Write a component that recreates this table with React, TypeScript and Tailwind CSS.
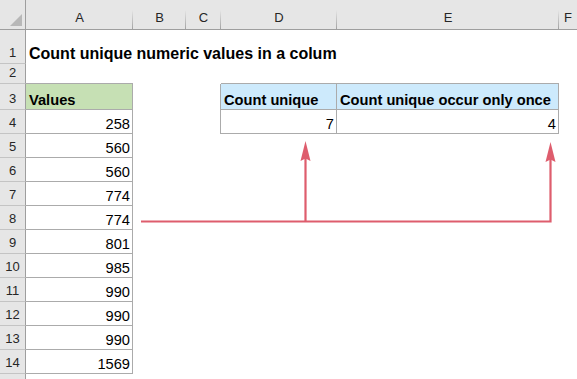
import React from 'react'

const COLS = ['A', 'B', 'C', 'D', 'E', 'F']
const VALUES = [258, 560, 560, 774, 774, 801, 985, 990, 990, 990, 1569]
const LINE = 'border-[#ababab]'

type Cell = {
  text?: string
  right?: boolean
  bold?: boolean
  title?: boolean
  fill?: string
  r?: boolean
  b?: boolean
}

// what each sheet cell holds, keyed by row number and column index
function cellAt(row: number, col: number): Cell {
  if (row === 1 && col === 0) return { text: 'Count unique numeric values in a colum', bold: true, title: true }
  if (row === 2 && (col === 0 || col === 3 || col === 4)) return { b: true }
  if (row === 3 && col === 0) return { text: 'Values', bold: true, fill: 'bg-[#c6e0b4]', r: true, b: true }
  if (row >= 4 && row <= 14 && col === 0) return { text: String(VALUES[row - 4]), right: true, r: true, b: true }
  if ((row === 3 || row === 4) && col === 2) return { r: true }
  if (row === 3 && col === 3) return { text: 'Count unique', bold: true, fill: 'bg-[#cdeafc]', r: true, b: true }
  if (row === 3 && col === 4) return { text: 'Count unique occur only once', bold: true, fill: 'bg-[#cdeafc]', r: true, b: true }
  if (row === 4 && col === 3) return { text: '7', right: true, r: true, b: true }
  if (row === 4 && col === 4) return { text: '4', right: true, r: true, b: true }
  return {}
}

function SheetCell({ cell }: { cell: Cell }) {
  return (
    <div
      className={[
        'relative flex items-end overflow-visible whitespace-nowrap pb-px text-black',
        cell.title ? 'text-[16px] leading-[18px]' : 'text-[14.67px] leading-4',
        cell.right ? 'justify-end pr-[2px]' : 'pl-[3px]',
        cell.bold ? 'font-bold' : '',
        cell.fill ?? '',
        cell.r ? 'border-r' : '',
        cell.b ? 'border-b' : '',
        cell.r || cell.b ? LINE : '',
      ].join(' ')}
    >
      {cell.text && <span className="relative z-10">{cell.text}</span>}
    </div>
  )
}

function Arrows() {
  const red = '#de5d6d'
  return (
    <svg className="pointer-events-none absolute left-0 top-0" width="577" height="379" viewBox="0 0 577 379">
      <path d="M141 221.5 H550.5 V158" fill="none" stroke={red} strokeWidth="2.2" />
      <path d="M305.5 221.5 V158" fill="none" stroke={red} strokeWidth="2.2" />
      <polygon points="305.5,141 310.5,161 305.5,158.5 300.5,161" fill={red} />
      <polygon points="550.5,142 555.5,162 550.5,159.5 545.5,162" fill={red} />
    </svg>
  )
}

export default function App() {
  // row 15 only peeks in at the bottom edge, so its label stays out of view
  const rows = Array.from({ length: 15 }, (_, i) => i + 1)
  return (
    <div className="relative h-[379px] w-[577px] overflow-hidden bg-white font-['Liberation_Sans',Arial,sans-serif]">
      <div className="grid grid-cols-[26px_107px_53px_35px_116px_222px_1fr] grid-rows-[30px_34px_20px_26px_repeat(12,24px)]">
        {/* select-all corner */}
        <div className="relative border-b border-r border-[#9e9e9e] bg-[#e6e6e6]">
          <svg className="absolute left-0 top-0" width="25" height="29">
            <polygon points="22,14 22,26 10,26" fill="#b8b8b8" />
          </svg>
        </div>
        {COLS.map((c, i) => (
          <div
            key={c}
            className="relative flex items-end justify-center border-b border-[#9e9e9e] bg-[#e6e6e6] pb-[3px] text-[13px] leading-4 text-[#262626]"
          >
            {c}
            {i < COLS.length - 1 && (
              <span className="absolute bottom-0 right-0 h-[19px] w-px bg-gradient-to-b from-[#e6e6e6] to-[#a3a3a3]" />
            )}
          </div>
        ))}

        {rows.map((row) => (
          <React.Fragment key={row}>
            <div className="flex items-end justify-center border-b border-r border-b-[#c4c4c4] border-r-[#9e9e9e] bg-[#e6e6e6] pb-[2px] text-[13px] leading-4 text-[#262626]">
              {row < 15 ? row : null}
            </div>
            {COLS.map((c, col) => (
              <SheetCell key={c} cell={cellAt(row, col)} />
            ))}
          </React.Fragment>
        ))}
      </div>
      <Arrows />
    </div>
  )
}
